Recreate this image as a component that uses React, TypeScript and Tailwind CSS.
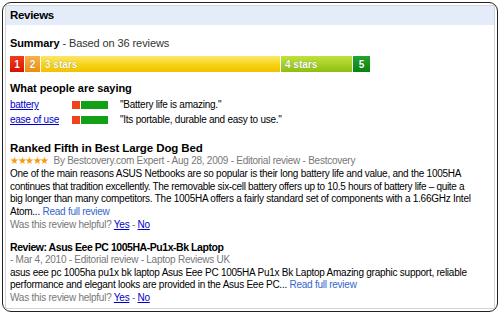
import React from "react";

const link = "text-[#0000cc] underline";
const readMore = "text-[#3366cc]";

function Stars() {
  return (
    <span className="text-[#f59b0c] text-[10px] tracking-[-1.5px] mr-[6px]">★★★★★</span>
  );
}

function OpinionBar() {
  return (
    <span className="flex w-[36px] h-[8px]">
      <span className="w-[8px] bg-[#f0421c]" />
      <span className="w-[1px]" />
      <span className="flex-1 bg-[#12a014]" />
    </span>
  );
}

function Helpful() {
  return (
    <div className="text-[#777]">
      Was this review helpful? <span className={link}>Yes</span> - <span className={link}>No</span>
    </div>
  );
}

export default function App() {
  return (
    <div className="w-[500px] h-[314px] bg-white p-[2px] font-['Liberation_Sans',Arial,sans-serif] text-[10px] tracking-[-0.25px] text-black">
      <div className="h-[310px] border-[1.5px] border-[#222] rounded-[9px] p-[2px] overflow-hidden">
        <div className="h-full border border-[#d4d4d4]">
          <div className="h-[19px] bg-[#e5ecf9] px-[4px] flex items-center font-bold text-[11.5px] tracking-[-0.3px]">Reviews</div>

          <div className="px-[4px] pt-[12px] whitespace-nowrap">
            <div className="leading-[13px] text-[11px] tracking-[-0.1px]">
              <b>Summary</b> <span className="text-[#333]">- Based on 36 reviews</span>
            </div>

            <div className="mt-[6px] flex h-[16px] w-[360px] text-white font-bold text-[10px] tracking-normal [text-shadow:0_0_1px_rgba(0,0,0,0.4)]">
              <div className="w-[14px] bg-gradient-to-b from-[#f43a1e] to-[#d80f00] flex items-center justify-center">1</div>
              <div className="w-[1px]" />
              <div className="w-[15px] bg-gradient-to-b from-[#f6b34a] to-[#ec8c08] flex items-center justify-center">2</div>
              <div className="w-[1px]" />
              <div className="w-[239px] bg-gradient-to-b from-[#fbe765] via-[#f7d513] to-[#f2c102] flex items-center pl-[4px]">3 stars</div>
              <div className="w-[1px]" />
              <div className="w-[71px] bg-gradient-to-b from-[#bfe23b] to-[#8fbe0c] flex items-center pl-[4px]">4 stars</div>
              <div className="w-[1px]" />
              <div className="flex-1 bg-gradient-to-b from-[#24a32a] to-[#07840c] flex items-center justify-center">5</div>
            </div>

            <div className="mt-[9px] font-bold text-[11px] tracking-[-0.05px] leading-[14px]">What people are saying</div>
            <div className="mt-[2px] flex flex-col">
              <div className="flex items-center h-[15px]">
                <span className={`${link} w-[62px]`}>battery</span>
                <OpinionBar />
                <span className="ml-[12px]">"Battery life is amazing."</span>
              </div>
              <div className="flex items-center h-[15px]">
                <span className={`${link} w-[62px]`}>ease of use</span>
                <OpinionBar />
                <span className="ml-[12px]">"Its portable, durable and easy to use."</span>
              </div>
            </div>

            <div className="mt-[14px] leading-[12.8px]">
              <div className="font-bold text-[11.5px] tracking-[-0.1px] leading-[14px]">Ranked Fifth in Best Large Dog Bed</div>
              <div className="text-[#777]">
                <Stars />By Bestcovery.com Expert - Aug 28, 2009 - Editorial review - Bestcovery
              </div>
              <div>
                One of the main reasons ASUS Netbooks are so popular is their long battery life and value, and the 1005HA
                <br />
                <span className="tracking-[-0.32px]">
                  continues that tradition excellently. The removable six-cell battery offers up to 10.5 hours of battery life – quite a
                </span>
                <br />
                big longer than many competitors. The 1005HA offers a fairly standard set of components with a 1.66GHz Intel
                <br />
                Atom... <span className={readMore}>Read full review</span>
              </div>
              <Helpful />
            </div>

            <div className="mt-[9px] leading-[12.8px]">
              <div className="font-bold text-[10.5px] tracking-[-0.45px] leading-[13px]">Review: Asus Eee PC 1005HA-Pu1x-Bk Laptop</div>
              <div className="text-[#777]">- Mar 4, 2010 - Editorial review - Laptop Reviews UK</div>
              <div>
                asus eee pc 1005ha pu1x bk laptop Asus Eee PC 1005HA Pu1x Bk Laptop Amazing graphic support, reliable
                <br />
                performance and elegant looks are provided in the Asus Eee PC... <span className={readMore}>Read full review</span>
              </div>
              <Helpful />
            </div>
          </div>
        </div>
      </div>
    </div>
  );
}
